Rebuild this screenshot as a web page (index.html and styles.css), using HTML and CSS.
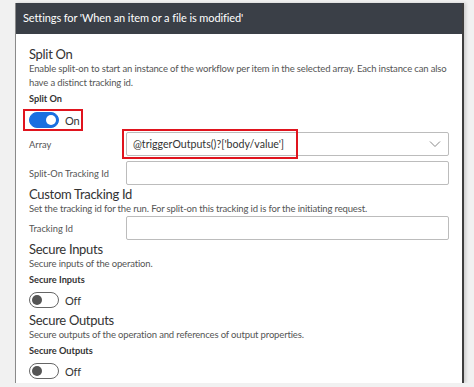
FILE: index.html
```html
<!DOCTYPE html>
<html lang="en">
<head>
    <meta charset="UTF-8">
    <title>Settings</title>
    <link rel="stylesheet" href="styles.css">
</head>
<body>
    <div class="panel">
        <div class="panel-header">Settings for 'When an item or a file is modified'</div>
        <div class="panel-body">
            <div class="section-title">Split On</div>
            <p class="desc">Enable split-on to start an instance of the workflow per item in the selected array. Each instance can also have a distinct tracking id.</p>
            <div class="field-label">Split On</div>
            <div class="toggle-row highlight">
                <span class="toggle on"><span class="knob"></span></span>
                <span class="toggle-text">On</span>
            </div>

            <div class="row array-row">
                <div class="row-label">Array</div>
                <div class="input select">
                    <span class="value highlight-box">@triggerOutputs()?['body/value']</span>
                    <svg class="chevron" width="12" height="8" viewBox="0 0 12 8"><path d="M1 1.5l5 5 5-5" fill="none" stroke="#888" stroke-width="1"/></svg>
                </div>
            </div>
            <div class="row">
                <div class="row-label">Split-On Tracking Id</div>
                <div class="input"></div>
            </div>

            <div class="section-title">Custom Tracking Id</div>
            <p class="desc">Set the tracking id for the run. For split-on this tracking id is for the initiating request.</p>
            <div class="row after-desc">
                <div class="row-label">Tracking Id</div>
                <div class="input"></div>
            </div>

            <div class="section-title">Secure Inputs</div>
            <p class="desc">Secure inputs of the operation.</p>
            <div class="field-label">Secure Inputs</div>
            <div class="toggle-row">
                <span class="toggle"><span class="knob"></span></span>
                <span class="toggle-text">Off</span>
            </div>

            <div class="section-title">Secure Outputs</div>
            <p class="desc">Secure outputs of the operation and references of output properties.</p>
            <div class="field-label">Secure Outputs</div>
            <div class="toggle-row">
                <span class="toggle"><span class="knob"></span></span>
                <span class="toggle-text">Off</span>
            </div>
        </div>
    </div>
</body>
</html>
```

FILE: styles.css
```css
body {
    margin: 0;
    background: #f1f1f1;
    font-family: Lato, "Open Sans", Arial, sans-serif;
    color: #333;
}
.panel {
    width: 446px;
    height: 380px;
    margin: 3px 0 0 15px;
    background: #fff;
    border-left: 1px solid #8a8a8a;
    border-right: 2px solid #3e3e3e;
    box-shadow: 2px 0 3px rgba(0, 0, 0, 0.15);
    overflow: hidden;
}
.panel-header {
    height: 31px;
    line-height: 30px;
    background: #3a3f47;
    color: #fff;
    font-size: 11px;
    letter-spacing: -0.1px;
    padding-left: 7px;
}
.panel-body {
    padding: 13px 13px 0 13px;
}
.section-title {
    font-size: 13px;
    letter-spacing: -0.3px;
    line-height: 15px;
    margin-top: 1px;
    color: #333;
}
.section-title:first-child {
    margin-top: 0;
}
.row + .section-title {
    margin-top: 2px;
}
.toggle-row + .section-title {
    margin-top: 2px;
}
.desc {
    margin: 0;
    font-size: 9.5px;
    letter-spacing: -0.15px;
    line-height: 14px;
    color: #555;
}
.field-label {
    font-size: 9.2px;
    font-weight: 700;
    line-height: 14px;
    margin-top: 2px;
    color: #333;
}
.toggle-row {
    display: flex;
    align-items: center;
    gap: 6px;
    height: 22px;
    margin-top: 2px;
}
.toggle-row.highlight {
    width: 60px;
    margin-top: 3px;
    margin-left: -6px;
    padding-left: 4px;
    border: 2px solid #e0141e;
    box-sizing: border-box;
}
.toggle {
    position: relative;
    width: 30px;
    height: 16px;
    border: 1px solid #666;
    border-radius: 8px;
    background: #fff;
    box-sizing: border-box;
}
.toggle .knob {
    position: absolute;
    top: 2px;
    left: 2px;
    width: 10px;
    height: 10px;
    border-radius: 50%;
    background: #555;
}
.toggle.on {
    background: #1a6fe0;
    border-color: #1a6fe0;
}
.toggle.on .knob {
    left: auto;
    right: 2px;
    background: #fff;
}
.toggle-text {
    font-size: 11px;
    letter-spacing: -0.2px;
    color: #333;
}
.row {
    display: flex;
    align-items: center;
    margin-top: 5px;
}
.row.array-row {
    margin-top: 1px;
}
.row.after-desc {
    margin-top: 0;
}
.row-label {
    width: 97px;
    flex-shrink: 0;
    white-space: nowrap;
    font-size: 9.3px;
    color: #555;
}
.input {
    flex: 1;
    height: 24px;
    border: 1px solid #bcbcbc;
    border-radius: 2px;
    box-sizing: border-box;
    display: flex;
    align-items: center;
}
.select .value {
    font-size: 10.6px;
    color: #333;
    white-space: nowrap;
}
.highlight-box {
    box-sizing: border-box;
    flex-shrink: 0;
    width: 176px;
    height: 30px;
    line-height: 26px;
    border: 2px solid #e0141e;
    padding-left: 9px;
    margin-left: -5px;
}
.chevron {
    margin-left: auto;
    margin-right: 7px;
}
```
